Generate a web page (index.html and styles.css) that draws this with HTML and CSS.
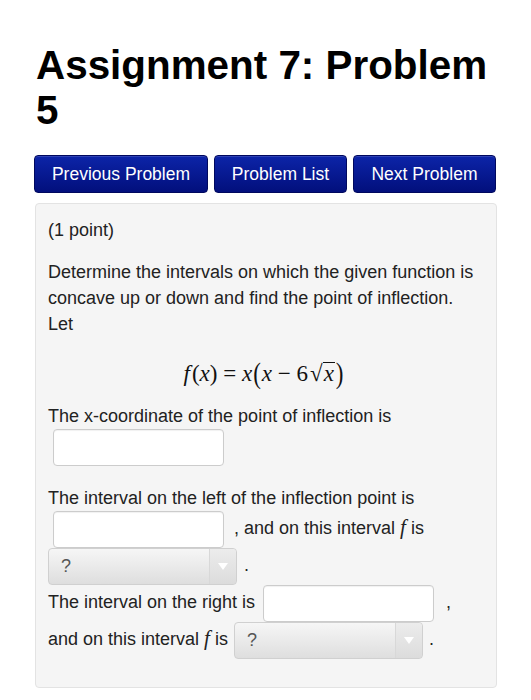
FILE: index.html
```html
<!DOCTYPE html>
<html>
<head>
<meta charset="utf-8">
<link rel="stylesheet" href="styles.css">
</head>
<body>
<div class="page">
  <h1 class="title">Assignment 7: Problem 5</h1>
  <div class="nav">
    <a class="btn">Previous Problem</a>
    <a class="btn">Problem List</a>
    <a class="btn">Next Problem</a>
  </div>
  <div class="panel">
    <p class="pts">(1 point)</p>
    <p class="intro">Determine the intervals on which the given function is concave up or down and find the point of inflection. Let</p>
    <div class="eq"><span class="it ff">f</span>(<span class="it">x</span>) = <span class="it">x</span><span class="bigp">(</span><span class="it">x</span> − 6<span class="sqrt"><span class="rad">√</span><span class="under"><span class="it">x</span></span></span><span class="bigp">)</span></div>
    <p class="q1">The x-coordinate of the point of inflection is<br><span class="field"></span></p>
    <p class="q2">The interval on the left of the inflection point is<br><span class="field"></span><span class="after">, and on this interval <span class="it fi">f</span> is</span><br><span class="select sel1"><span class="qm">?</span><span class="arrow"></span></span><span class="dot">.</span><br>The interval on the right is <span class="field rightf"></span><span class="comma">,</span><br>and on this interval <span class="it fi">f</span> is <span class="select sel2"><span class="qm">?</span><span class="arrow"></span></span><span class="dot2">.</span></p>
  </div>
</div>
</body>
</html>
```

FILE: styles.css
```css
html, body {
  margin: 0;
  padding: 0;
  background: #fff;
}
.page {
  padding: 0 34px 0 34px;
  font-family: "Liberation Sans", Arial, sans-serif;
  color: #222;
}
.title {
  margin: 0;
  padding-top: 43px;
  padding-left: 2px;
  font-size: 40.4px;
  line-height: 45px;
  font-weight: bold;
  color: #000;
  width: 458px;
}
.nav {
  display: flex;
  gap: 6px;
  margin-top: 22px;
}
.btn {
  display: flex;
  align-items: center;
  justify-content: center;
  height: 38px;
  box-sizing: border-box;
  color: #fff;
  font-size: 17.5px;
  border-radius: 4px;
  background: linear-gradient(#0c24a8, #020f7c);
  border: 1px solid #00085e;
  box-shadow: inset 0 1px 0 rgba(255,255,255,0.15);
}
.btn:nth-child(1) { width: 174px; }
.btn:nth-child(2) { width: 133px; }
.btn:nth-child(3) { width: 143px; }
.panel {
  margin-top: 10px;
  margin-left: 1px;
  background: #f5f5f5;
  border: 1px solid #e3e3e3;
  border-radius: 4px;
  padding: 13px 20px 28px 12px;
  font-size: 18px;
  line-height: 26px;
}
.panel p {
  margin: 0;
}
.intro {
  margin-top: 16px !important;
}
.eq {
  font-family: "Liberation Serif", "Times New Roman", serif;
  font-size: 23px;
  text-align: center;
  margin: 22px 0 14px 0;
  line-height: 30px;
  padding-left: 4px;
  color: #111;
}
.it { font-style: italic; }
.ff { margin-right: 2px; }
.bigp {
  display: inline-block;
  transform: scaleY(1.3);
  margin: 0 1px;
}
.sqrt {
  display: inline-block;
  margin-left: 2px;
}
.rad {
  font-style: normal;
}
.under {
  border-top: 1px solid #111;
  display: inline-block;
  line-height: 22px;
  padding: 0 1px;
}
.field {
  display: inline-block;
  vertical-align: middle;
  width: 171px;
  height: 37px;
  box-sizing: border-box;
  background: #fff;
  border: 1px solid #ccc;
  border-radius: 4px;
  margin-left: 5px;
  box-shadow: inset 0 1px 1px rgba(0,0,0,0.06);
}
.q2 {
  margin-top: 19px !important;
}
.after {
  margin-left: 10px;
}
.fi {
  font-family: "Liberation Serif", "Times New Roman", serif;
  font-size: 21px;
}
.select {
  display: inline-flex;
  vertical-align: middle;
  width: 189px;
  height: 37px;
  box-sizing: border-box;
  border-radius: 4px;
  border: 1px solid #d0d0d0;
  background: linear-gradient(#f6f6f6, #dedede);
  position: relative;
  color: #555;
}
.qm {
  flex: 1;
  padding-left: 12px;
  line-height: 35px;
  font-size: 18px;
}
.arrow {
  width: 26px;
  border-left: 1px solid #d8d8d8;
  background: linear-gradient(#ececec, #dcdcdc);
  border-radius: 0 4px 4px 0;
  position: relative;
}
.arrow::after {
  content: "";
  position: absolute;
  left: 8px;
  top: 14px;
  border-left: 5px solid transparent;
  border-right: 5px solid transparent;
  border-top: 7px solid #fff;
}
.dot { margin-left: 7px; }
.rightf { margin-left: 3px; }
.comma { margin-left: 12px; }
.sel2 { margin-left: 1px; }
.dot2 { margin-left: 6px; }
```
